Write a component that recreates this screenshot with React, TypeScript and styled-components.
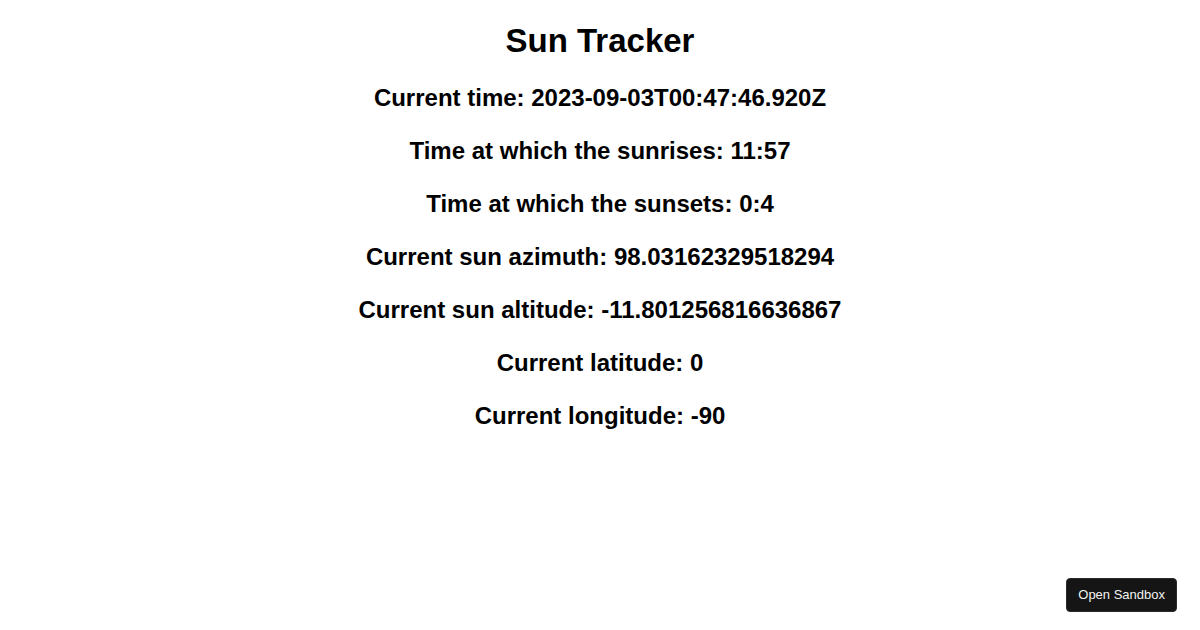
import React from "react";
import styled, { createGlobalStyle } from "styled-components";

const GlobalStyle = createGlobalStyle`
  html, body {
    margin: 0;
    padding: 0;
    background: #ffffff;
  }
  body {
    font-family: "Liberation Sans", Arial, sans-serif;
    color: #000000;
  }
`;

const Page = styled.div`
  display: flex;
  flex-direction: column;
  align-items: center;
  gap: 25px;
  padding-top: 22px;
  text-align: center;
`;

const Title = styled.h1`
  margin: 0;
  font-size: 33px;
  line-height: 37px;
  font-weight: 700;
`;

const Line = styled.h2`
  margin: 0;
  font-size: 24px;
  line-height: 28px;
  font-weight: 700;
`;

const SandboxButton = styled.a`
  position: fixed;
  right: 23px;
  bottom: 18px;
  display: flex;
  align-items: center;
  height: 34px;
  padding: 0 11px 1px;
  box-sizing: border-box;
  border-radius: 4px;
  border: 1px solid #2b2b2b;
  background: #151515;
  color: #f2f2f2;
  font-size: 13px;
  text-decoration: none;
  cursor: pointer;
`;

const readings: [string, string][] = [
  ["Current time", "2023-09-03T00:47:46.920Z"],
  ["Time at which the sunrises", "11:57"],
  ["Time at which the sunsets", "0:4"],
  ["Current sun azimuth", "98.03162329518294"],
  ["Current sun altitude", "-11.801256816636867"],
  ["Current latitude", "0"],
  ["Current longitude", "-90"],
];

export default function App() {
  return (
    <>
      <GlobalStyle />
      <Page>
        <Title>Sun Tracker</Title>
        {readings.map(([label, value]) => (
          <Line key={label}>
            {label}: {value}
          </Line>
        ))}
      </Page>
      <SandboxButton>Open Sandbox</SandboxButton>
    </>
  );
}
